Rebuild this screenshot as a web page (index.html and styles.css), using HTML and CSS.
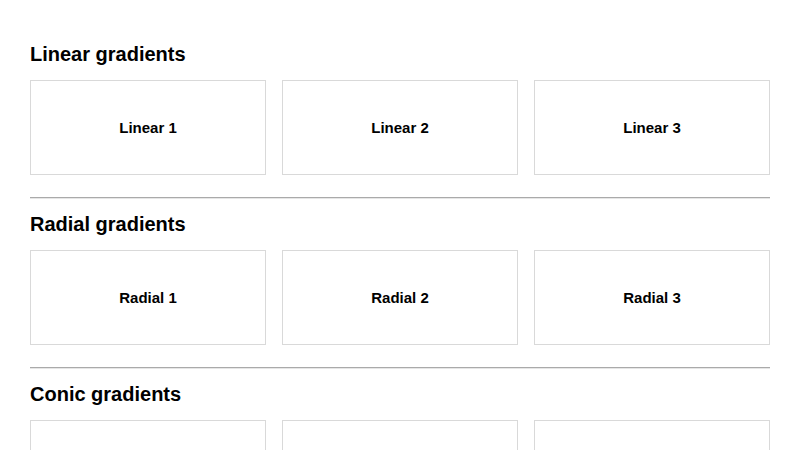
FILE: index.html
```html
<!DOCTYPE html>
<html>
<head>
<meta charset="utf-8">
<link rel="stylesheet" href="styles.css">
</head>
<body>
<section class="group">
  <h2 class="title">Linear gradients</h2>
  <div class="grid">
    <div class="card">Linear 1</div>
    <div class="card">Linear 2</div>
    <div class="card">Linear 3</div>
  </div>
</section>
<hr class="rule">
<section class="group">
  <h2 class="title">Radial gradients</h2>
  <div class="grid">
    <div class="card">Radial 1</div>
    <div class="card">Radial 2</div>
    <div class="card">Radial 3</div>
  </div>
</section>
<hr class="rule">
<section class="group">
  <h2 class="title">Conic gradients</h2>
  <div class="grid">
    <div class="card">Conic 1</div>
    <div class="card">Conic 2</div>
    <div class="card">Conic 3</div>
  </div>
</section>
</body>
</html>
```
FILE: styles.css
```css
html, body {
  margin: 0;
  background: #fff;
}
body {
  padding: 43px 30px 30px;
  font-family: "Liberation Sans", Arial, sans-serif;
  color: #000;
}
.title {
  margin: 0 0 14px;
  font-size: 20px;
  font-weight: bold;
  line-height: 23px;
}
.grid {
  display: grid;
  grid-template-columns: repeat(3, 1fr);
  gap: 16px;
}
.card {
  height: 95px;
  box-sizing: border-box;
  border: 1px solid #d9d9d9;
  display: flex;
  align-items: center;
  justify-content: center;
  font-size: 15px;
  font-weight: bold;
}
.rule {
  margin: 22px 0 14px;
  border: 0;
  border-top: 1px solid #aaa;
  border-bottom: 1px solid #e6e6e6;
  height: 0;
}
```
